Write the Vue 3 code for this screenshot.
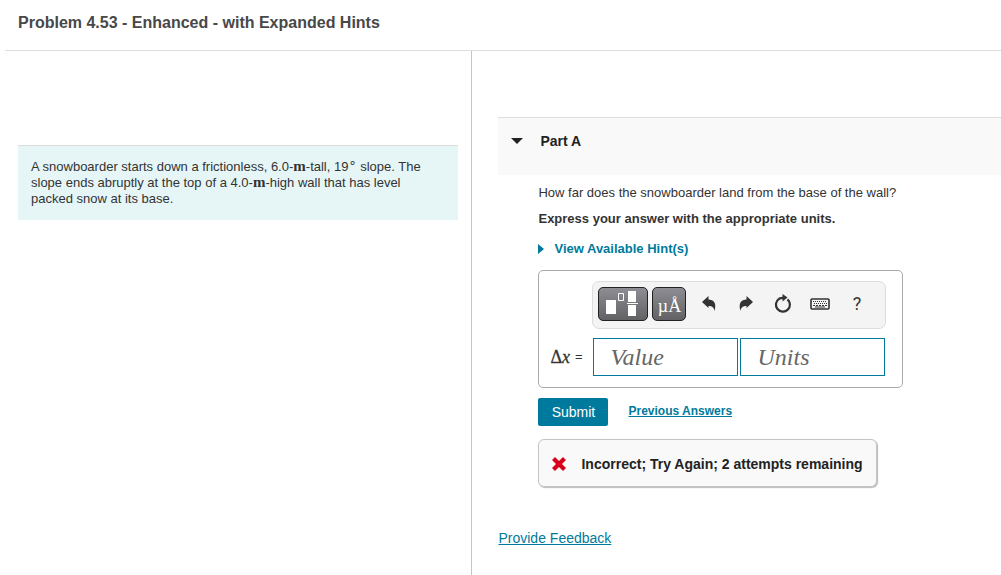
<script setup>
import { ref } from 'vue'

const amount = ref('')
const units = ref('')
const open = ref(true)
</script>

<template>
  <div class="page">
    <header class="title-bar">
      <h1>Problem 4.53 - Enhanced - with Expanded Hints</h1>
    </header>
    <div class="columns">
      <aside class="statement-pane">
        <p class="statement">
          A snowboarder starts down a frictionless, 6.0-<span class="math-unit">m</span>-tall, 19<span class="degree">∘</span> slope. The slope ends abruptly at the top of a 4.0-<span class="math-unit">m</span>-high wall that has level packed snow at its base.
        </p>
      </aside>
      <main class="work-pane">
        <section class="part">
          <h2>
            <button class="part-toggle" type="button" :aria-expanded="open" @click="open = !open">
              <svg width="12" height="6" viewBox="0 0 12 6" aria-hidden="true"><path d="M0 0h12L6 6z" fill="#222" /></svg>
              Part A
            </button>
          </h2>
          <div v-if="open" class="part-body">
            <p class="question">How far does the snowboarder land from the base of the wall?</p>
            <p class="instruction">Express your answer with the appropriate units.</p>
            <button class="hints" type="button">
              <svg width="6" height="10" viewBox="0 0 6 10" aria-hidden="true"><path d="M0 0l6 5-6 5z" fill="#007a9c" /></svg>
              View Available Hint(s)
            </button>
            <form class="answer" @submit.prevent>
              <div class="answer-box">
                <div class="toolbar" role="toolbar" aria-label="Equation tools">
                  <button class="tool-dark templates" type="button" aria-label="Templates">
                    <svg width="48" height="32" viewBox="1 1 48 32" aria-hidden="true">
                      <path d="M8 13h10v14H8zM30 4h8v11h-8zM30 18h8v11h-8z" fill="#fff" />
                      <path d="M29 16.500h11" stroke="#fff" />
                      <path d="M20.500 6.500h5v7h-5z" fill="none" stroke="#fff" />
                    </svg>
                  </button>
                  <button class="tool-dark symbols" type="button" aria-label="Symbols">µÅ</button>
                  <div class="tools">
                    <button class="tool" type="button" aria-label="Undo">
                      <svg width="16" height="18" viewBox="0 0 16 18" aria-hidden="true"><path d="M1 7L7.500 1v3.500c5 0 8.500 3.500 6 11.500-.5-3.500-2-5-6-5V13z" fill="#333" /></svg>
                    </button>
                    <button class="tool" type="button" aria-label="Redo">
                      <svg width="16" height="18" viewBox="0 0 16 18" aria-hidden="true"><path d="M15 7L8.500 1v3.500c-5 0-8.500 3.500-6 11.500.5-3.500 2-5 6-5V13z" fill="#333" /></svg>
                    </button>
                    <button class="tool" type="button" aria-label="Reset">
                      <svg width="18" height="20" viewBox="0 0 18 20" aria-hidden="true">
                        <path d="M13.500 5.300A7 7 0 1 1 5 4.800Q7 3.700 10 3.800" fill="none" stroke="#333" stroke-width="2.200" />
                        <path d="M8.500 0l5 3.500-5 4z" fill="#333" />
                      </svg>
                    </button>
                    <button class="tool" type="button" aria-label="Keyboard shortcuts">
                      <svg width="20" height="12" viewBox="0 0 20 12" aria-hidden="true">
                        <rect x="1" y="1" width="18" height="10" rx="1" fill="none" stroke="#333" stroke-width="1.600" />
                        <path d="M3 3.500h14M4 5.500h13" stroke="#333" stroke-dasharray="1 1" />
                        <path d="M3 7.500h14" stroke="#333" stroke-dasharray="2 1" />
                        <path d="M5 9h10" stroke="#333" />
                      </svg>
                    </button>
                    <button class="tool help" type="button" aria-label="Help">?</button>
                  </div>
                </div>
                <div class="fields">
                  <label class="variable" for="value"><span>Δ<i>x</i></span> =</label>
                  <input id="value" v-model="amount" type="text" placeholder="Value">
                  <input v-model="units" type="text" placeholder="Units" aria-label="Units">
                </div>
              </div>
              <div class="actions">
                <button class="submit" type="submit">Submit</button>
                <a class="previous" href="#">Previous Answers</a>
              </div>
            </form>
            <div class="feedback" role="status">
              <svg width="14" height="14" viewBox="0 0 14 14" aria-hidden="true"><path d="M3 0l4 4 4-4 3 3-4 4 4 4-3 3-4-4-4 4-3-3 4-4-4-4z" fill="#d9001b" /></svg>
              Incorrect; Try Again; 2 attempts remaining
            </div>
          </div>
        </section>
        <a class="provide" href="#">Provide Feedback</a>
      </main>
    </div>
  </div>
</template>

<style>
body {
  background: #fff;
}
</style>

<style scoped>
.page {
  display: flex;
  flex-direction: column;
  min-height: 100vh;
  color: #333;
  font: 13px/16px "Liberation Sans", Arial, sans-serif;
}
h1, h2, p {
  margin: 0;
}
button {
  padding: 0;
  border: 0;
  background: none;
  color: inherit;
  font: inherit;
  cursor: pointer;
}
svg {
  display: block;
  flex: none;
}
.title-bar {
  margin-left: 5px;
  padding: 13px 13px 17px;
  border-bottom: 1px solid #ddd;
}
h1 {
  color: #484848;
  font-size: 16px;
  line-height: 20px;
}
.columns {
  display: flex;
  flex: 1;
}
.statement-pane {
  flex: 0 0 47.2%;
  box-sizing: border-box;
  padding: 94px 13px 0 18px;
  border-right: 1px solid #c0c6cb;
}
.statement {
  padding: 13px;
  border-top: 1px solid #ddd;
  background: #e6f6f7;
}
.math-unit {
  font: bold 15px/1 "Liberation Serif", serif;
}
.degree {
  font: 13px/0 "DejaVu Sans", sans-serif;
  vertical-align: 4px;
}
.work-pane {
  flex: 1;
  min-width: 0;
  padding: 66px 0 28px 26px;
}
h2 {
  border-top: 1px solid #ddd;
  background: #f9f9f9;
  font-size: 14px;
}
.part-toggle {
  display: flex;
  align-items: center;
  gap: 17px;
  width: 100%;
  padding: 15px 13px 26px;
  color: #222;
}
.part-body {
  padding: 10px 40px 0;
}
.instruction {
  margin-top: 10px;
  font-weight: bold;
}
.hints {
  display: flex;
  align-items: center;
  gap: 10px;
  margin-top: 14px;
  color: #007a9c;
  font-weight: bold;
}
.answer-box {
  width: fit-content;
  margin-top: 13px;
  padding: 10px 17px 11px 11px;
  border: 1px solid #aaa;
  border-radius: 5px;
}
.toolbar {
  display: flex;
  align-items: center;
  gap: 4px;
  margin: 0 -1px 9px 42px;
  padding: 5px 5px 7px;
  border: 1px solid #ddd;
  border-radius: 7px;
  background: #f4f4f4;
}
.tool-dark {
  box-sizing: border-box;
  height: 34px;
  border: 1px solid #222;
  border-radius: 5px;
  background: linear-gradient(#8d8d94, #626265);
  color: #fff;
}
.templates {
  display: grid;
  place-items: center;
  width: 50px;
}
.symbols {
  width: 34px;
  padding-top: 4px;
  font: 18px/28px "Liberation Serif", serif;
}
.tools {
  display: flex;
}
.tool {
  display: grid;
  place-items: center;
  width: 37px;
  height: 34px;
}
.help {
  color: #333;
  font: 18px/20px Roboto, sans-serif;
}
.fields {
  display: flex;
  align-items: center;
  gap: 2px;
}
.variable {
  display: flex;
  align-items: center;
  gap: 5px;
  width: 41px;
  white-space: nowrap;
}
.variable span {
  font: 18px/18px "Liberation Serif", serif;
  -webkit-text-stroke: 0.3px;
}
.fields input {
  box-sizing: border-box;
  width: 145px;
  height: 38px;
  padding: 0 16px;
  border: 1px solid #007a9c;
  outline: 0;
  background: #fff;
  color: #333;
  font: italic 24px/34px "Liberation Serif", serif;
}
.fields input::placeholder {
  color: #666;
}
.actions {
  display: flex;
  align-items: center;
  gap: 20px;
  margin-top: 10px;
}
.submit {
  width: 70px;
  height: 28px;
  border-radius: 2px;
  background: #007a9c;
  color: #fff;
  font-size: 14px;
}
a {
  color: #007a9c;
}
.previous {
  padding-bottom: 2px;
  font-size: 12px;
  font-weight: bold;
}
.feedback {
  display: flex;
  align-items: center;
  gap: 15px;
  width: fit-content;
  margin-top: 13px;
  padding: 16px 13px 14px;
  border: 1px solid #c4c4c4;
  border-radius: 6px;
  background: #f9f9f9;
  box-shadow: 1px 1px 1px #bbb;
  color: #222;
  font-size: 14px;
  font-weight: bold;
}
.provide {
  display: inline-block;
  margin-top: 43px;
  font-size: 14px;
}
</style>
